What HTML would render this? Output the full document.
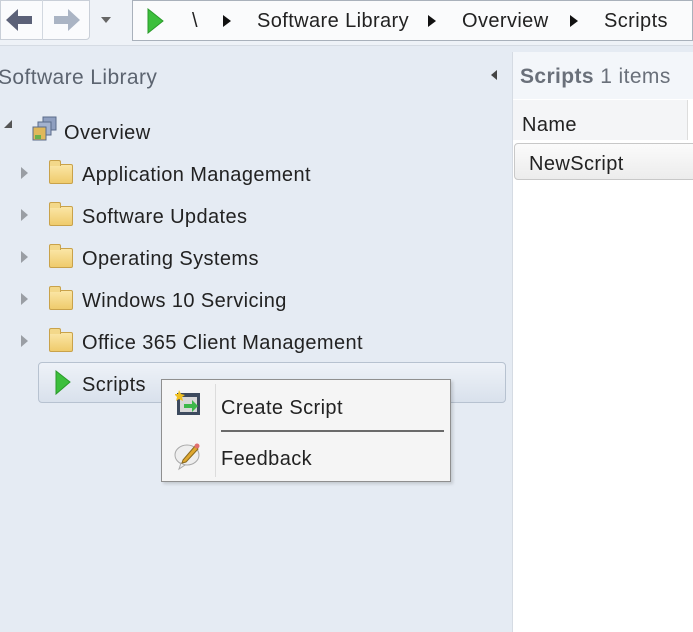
<!DOCTYPE html>
<html><head><style>
*{margin:0;padding:0;box-sizing:border-box}
body{width:693px;height:632px;overflow:hidden;background:#e5ebf3;font-family:"Liberation Sans",sans-serif;color:#222;position:relative}
.a{position:absolute}
.t{font-size:20px;letter-spacing:0.4px;white-space:nowrap}
.fold{position:absolute;width:24px;height:20px;background:linear-gradient(#fbe6a6,#efcb6c);border:1px solid #c9a24a;border-radius:2px}
.fold:before{content:"";position:absolute;left:-1px;top:-5px;width:10px;height:5px;background:#f3d88a;border:1px solid #c9a24a;border-bottom:none;border-radius:2px 2px 0 0}
.tri{position:absolute;width:0;height:0;border-left:7px solid #9a9ea4;border-top:6px solid transparent;border-bottom:6px solid transparent}
</style></head><body>
<div class="a" style="left:0;top:0;width:693px;height:46px;background:#eef2f7;border-bottom:1px solid #d5dbe3"></div>
<div class="a" style="left:0;top:0;width:90px;height:40px;background:#fafbfd;border:1px solid #c9cfd8;border-radius:0 0 4px 0"></div>
<div class="a" style="left:42px;top:0;width:1px;height:40px;background:#d2d8e0"></div>
<svg class="a" style="left:2px;top:6px" width="34" height="28"><path d="M4 14 L16 3 L16 10 L30 10 L30 18 L16 18 L16 25 Z" fill="#5b6178"/></svg>
<svg class="a" style="left:50px;top:6px" width="34" height="28"><path d="M30 14 L18 3 L18 10 L4 10 L4 18 L18 18 L18 25 Z" fill="#aab4c4"/></svg>
<div class="a" style="left:101px;top:17px;border-top:6px solid #666;border-left:5px solid transparent;border-right:5px solid transparent"></div>
<div class="a" style="left:132px;top:0;width:561px;height:41px;background:#fafbfc;border:1px solid #a9b1bb"></div>
<svg class="a" style="left:146px;top:8px" width="20" height="26"><path d="M2 1 L17 13 L2 25 Z" fill="#3cbf3c" stroke="#2a9a2a"/></svg>
<div class="a t" style="left:192px;top:10px">\</div>
<div class="a" style="left:223px;top:15px;border-left:8px solid #111;border-top:6px solid transparent;border-bottom:6px solid transparent"></div>
<div class="a t" style="left:257px;top:10px">Software Library</div>
<div class="a" style="left:428px;top:15px;border-left:8px solid #111;border-top:6px solid transparent;border-bottom:6px solid transparent"></div>
<div class="a t" style="left:462px;top:10px">Overview</div>
<div class="a" style="left:570px;top:15px;border-left:8px solid #111;border-top:6px solid transparent;border-bottom:6px solid transparent"></div>
<div class="a t" style="left:604px;top:10px">Scripts</div>
<div class="a t" style="left:-2px;top:66px;color:#5c6470;font-size:21px">Software Library</div>
<div class="a" style="left:491px;top:70px;border-right:6px solid #444;border-top:5px solid transparent;border-bottom:5px solid transparent"></div>
<div class="a" style="left:4px;top:120px;border-right:8px solid #555;border-top:8px solid transparent"></div>
<svg class="a" style="left:31px;top:116px" width="28" height="28"><rect x="12" y="1" width="13" height="13" fill="#8f9fc0" stroke="#5a6b8a"/><rect x="7" y="6" width="13" height="13" fill="#a3b2cf" stroke="#5a6b8a"/><rect x="2" y="11" width="13" height="13" fill="#e0b85a" stroke="#5a6b8a"/><rect x="4" y="19" width="6" height="4" fill="#6ab04c"/></svg>
<div class="a t" style="left:64px;top:122px">Overview</div>
<div class="tri" style="left:21px;top:167px"></div><div class="fold" style="left:49px;top:164px"></div><div class="a t" style="left:82px;top:164px">Application Management</div>
<div class="tri" style="left:21px;top:209px"></div><div class="fold" style="left:49px;top:206px"></div><div class="a t" style="left:82px;top:206px">Software Updates</div>
<div class="tri" style="left:21px;top:251px"></div><div class="fold" style="left:49px;top:248px"></div><div class="a t" style="left:82px;top:248px">Operating Systems</div>
<div class="tri" style="left:21px;top:293px"></div><div class="fold" style="left:49px;top:290px"></div><div class="a t" style="left:82px;top:290px">Windows 10 Servicing</div>
<div class="tri" style="left:21px;top:335px"></div><div class="fold" style="left:49px;top:332px"></div><div class="a t" style="left:82px;top:332px">Office 365 Client Management</div>
<div class="a" style="left:38px;top:362px;width:468px;height:41px;background:linear-gradient(#eef2f8,#d9e1ec);border:1px solid #b7c2d0;border-radius:4px"></div>
<svg class="a" style="left:54px;top:370px" width="20" height="26"><path d="M2 1 L16 12 L2 24 Z" fill="#3cbf3c" stroke="#2a9a2a"/></svg>
<div class="a t" style="left:82px;top:374px">Scripts</div>
<div class="a" style="left:512px;top:52px;width:181px;height:580px;background:#fff;border-left:1px solid #d5dbe3"></div>
<div class="a" style="left:513px;top:52px;width:180px;height:47px;background:#f3f6fa"></div>
<div class="a t" style="left:520px;top:65px;color:#6a707a;font-size:21px"><b>Scripts</b> 1 items</div>
<div class="a" style="left:513px;top:100px;width:175px;height:40px;background:#f4f5f7;border-right:1px solid #ddd"></div>
<div class="a t" style="left:522px;top:114px">Name</div>
<div class="a" style="left:514px;top:143px;width:185px;height:37px;background:linear-gradient(#fbfbfb,#ececec);border:1px solid #c8c8c8;border-radius:4px"></div>
<div class="a t" style="left:529px;top:153px">NewScript</div>
<div class="a" style="left:161px;top:379px;width:290px;height:103px;background:#f5f5f5;border:1px solid #8f8f8f;box-shadow:2px 2px 3px rgba(0,0,0,.15)"></div>
<div class="a" style="left:215px;top:384px;width:1px;height:93px;background:#dcdcdc"></div>
<svg class="a" style="left:175px;top:390px" width="28" height="28"><rect x="2" y="3" width="23" height="22" fill="#3d4a5e"/><rect x="5" y="7" width="17" height="15" fill="#d8d8d8"/><path d="M9 14 h8 v-4 l6 6 l-6 6 v-4 h-8z" fill="#3cb84a"/><path d="M4 0 l2 4 l4 1 l-3 2 l1 4 l-4-2 l-3 2 l1-4 l-3-3 l4 0z" fill="#f0c020"/></svg>
<div class="a t" style="left:221px;top:397px">Create Script</div>
<div class="a" style="left:221px;top:430px;width:223px;height:2px;background:#6a6a6a"></div>
<svg class="a" style="left:173px;top:441px" width="30" height="30"><ellipse cx="14" cy="14" rx="12" ry="10" fill="#eee" stroke="#aaa"/><path d="M8 22 l-2 6 l6-4z" fill="#eee" stroke="#aaa"/><path d="M10 19 L22 5 L25 8 L13 21 L9 22z" fill="#e0a830" stroke="#8a6a20"/><circle cx="24" cy="5" r="2.5" fill="#e07070"/></svg>
<div class="a t" style="left:221px;top:448px">Feedback</div>
</body></html>
